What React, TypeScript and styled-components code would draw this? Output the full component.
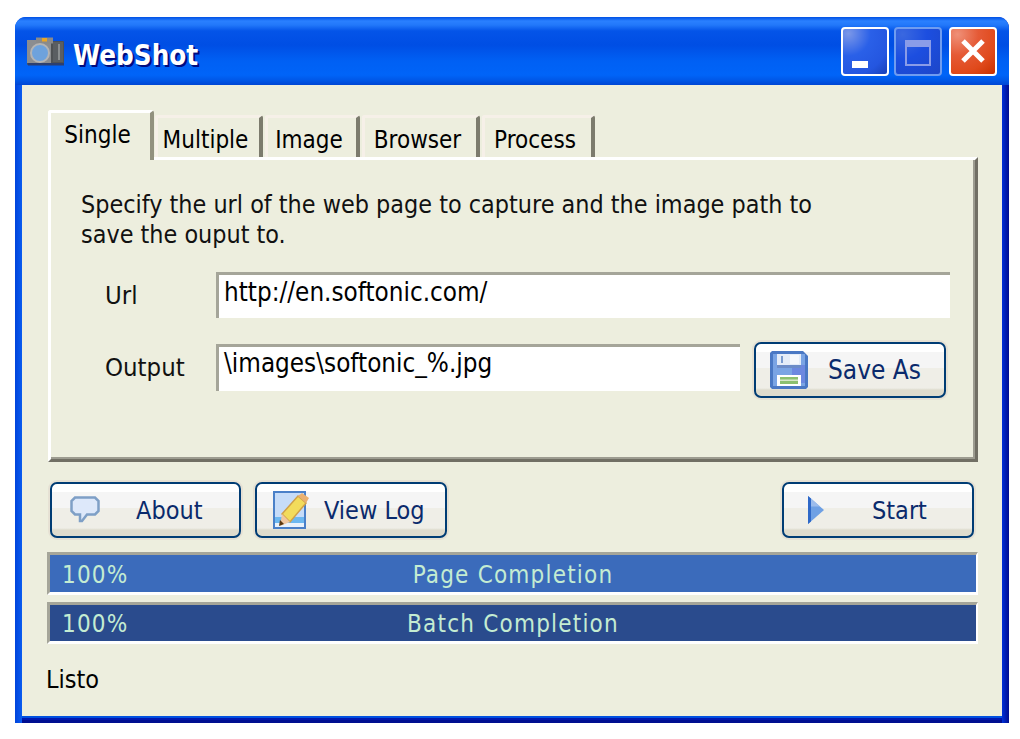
import React from "react";
import styled, { createGlobalStyle } from "styled-components";

const Global = createGlobalStyle`
  html, body { margin: 0; padding: 0; background: #fff; }
  * { box-sizing: border-box; }
  body { font-family: "DejaVu Sans", sans-serif; font-stretch: condensed; }
`;

const Page = styled.div`
  width: 1020px;
  height: 739px;
  padding: 17px 11px 16px 15px;
  background: #fff;
`;

const Window = styled.div`
  height: 706px;
  display: flex;
  flex-direction: column;
  border-radius: 11px 11px 0 0;
  overflow: hidden;
  background: linear-gradient(90deg, #0044dc 0, #0a5cf0 7px, #0030d8 987px, #000e90 994px);
`;

const TitleBar = styled.header`
  height: 68px;
  flex: none;
  display: flex;
  align-items: center;
  padding: 0 12px 0 11px;
  background: linear-gradient(
    180deg,
    #0050e4 0,
    #2a80ff 4px,
    #2278fa 8px,
    #0454e8 14px,
    #004ee4 28px,
    #0060f4 44px,
    #0064f8 58px,
    #0058e8 63px,
    #0046d4 68px
  );
`;

const AppIcon = styled.svg`
  width: 40px;
  height: 30px;
  flex: none;
  margin: 0 7px 0 0;
`;

const Title = styled.h1`
  flex: 1;
  margin: 8px 0 0;
  font: bold 27.5px "DejaVu Sans", sans-serif;
  font-stretch: condensed;
  color: #fff;
  text-shadow: 2px 2px 0 #000c80;
`;

const Caption = styled.div`
  display: flex;
  align-items: center;
`;

const CaptionButton = styled.button<{ $kind: "min" | "max" | "close" }>`
  width: 48px;
  height: 49px;
  padding: 0;
  margin: 0 0 0 ${(p) => (p.$kind === "max" ? "5px" : p.$kind === "close" ? "7px" : "0")};
  display: flex;
  align-items: center;
  justify-content: center;
  border-radius: 4px;
  border: 2.5px solid ${(p) => (p.$kind === "max" ? "#6f9cf0" : "#fff")};
  background: ${(p) =>
    p.$kind === "close"
      ? "radial-gradient(circle at 15% 12%, #ef9078 0, #e55a36 38%, #e04a1c 70%, #c83000 100%)"
      : p.$kind === "max"
        ? "radial-gradient(circle at 15% 12%, #3a68e0 0, #1c4ee0 45%, #1d46c8 100%)"
        : "radial-gradient(circle at 12% 10%, #7c98e8 0, #2a60e8 40%, #2456e0 75%, #1840b8 100%)"};
  svg { display: block; }
`;

const Client = styled.main`
  flex: 1;
  display: flex;
  flex-direction: column;
  margin: 0 7px 7px;
  padding: 25px 24px 0 26px;
  background: #edeede;
  box-shadow: 0 2px 0 #0050e0, 0 4px 0 #0018b0, 0 7px 0 #000e90;
`;

const TabStrip = styled.div`
  height: 47px;
  flex: none;
  display: flex;
  align-items: flex-start;
`;

const Tab = styled.div<{ $active?: boolean; $w: number; $mr: number }>`
  position: relative;
  z-index: ${(p) => (p.$active ? 2 : 1)};
  width: ${(p) => p.$w}px;
  height: ${(p) => (p.$active ? 50 : 42)}px;
  margin: ${(p) => (p.$active ? 0 : 5)}px ${(p) => p.$mr}px 0 0;
  padding: 4px 6px 0 0;
  display: flex;
  justify-content: center;
  font-size: 24px;
  line-height: 36px;
  color: #000;
  background: #edeede;
  border-top: 3px solid ${(p) => (p.$active ? "#fff" : "#f6f0e8")};
  border-left: 3px solid ${(p) => (p.$active ? "#fff" : "#f6f0e8")};
  border-right: 4px solid ${(p) => (p.$active ? "#92917f" : "#7c7b6d")};
  border-radius: 3px 3px 0 0;
`;

const Panel = styled.section`
  height: 305px;
  flex: none;
  display: flex;
  flex-direction: column;
  padding: 30px 0 0 30px;
  border-top: 3px solid #fff;
  border-left: 3px solid #fff;
  border-right: 3px solid #716f64;
  border-bottom: 3px solid #716f64;
  box-shadow: inset -2px -2px 0 #9d9c90;
`;

const Intro = styled.p`
  margin: 0;
  width: 760px;
  font-size: 24.9px;
  line-height: 30px;
  color: #111;
`;

const UrlRow = styled.div`
  display: flex;
  align-items: center;
  margin-top: 22px;
  height: 46px;
`;

const OutputRow = styled.div`
  display: flex;
  align-items: flex-start;
  margin-top: 24px;
  height: 56px;
`;

const FieldLabel = styled.label<{ $mt?: number }>`
  width: 135px;
  height: 46px;
  margin-top: ${(p) => p.$mt ?? 0}px;
  padding-left: 24px;
  flex: none;
  display: flex;
  align-items: center;
  font-size: 25.5px;
  color: #111;
`;

const Field = styled.div<{ $w: number; $h: number; $mt?: number; $pb: number }>`
  width: ${(p) => p.$w}px;
  height: ${(p) => p.$h}px;
  margin-top: ${(p) => p.$mt ?? 0}px;
  flex: none;
  padding: 0 0 ${(p) => p.$pb}px 5px;
  display: flex;
  align-items: center;
  font-size: 25.8px;
  color: #000;
  background: #fff;
  border-top: 3px solid #a5a599;
  border-left: 3px solid #a5a599;
`;

const Btn = styled.button<{ $w: number; $ml?: number; $size?: number }>`
  width: ${(p) => p.$w}px;
  height: 56px;
  flex: none;
  margin-left: ${(p) => p.$ml ?? 0}px;
  padding: 0;
  display: flex;
  align-items: center;
  font: ${(p) => p.$size ?? 25}px "DejaVu Sans", sans-serif;
  font-stretch: condensed;
  color: #0a2a6c;
  border: 2px solid #003c74;
  border-radius: 7px;
  background: linear-gradient(
    180deg,
    #fff 0,
    #fff 8px,
    #f5f5f5 8px,
    #f5f5f5 24px,
    #efeee7 24px,
    #efeee7 44px,
    #dedbcd 46px,
    #dedbcd 54px
  );
  box-shadow: 0 0 0 2px #e6e1d4;
`;

const BtnIcon = styled.svg<{ $ml: number }>`
  flex: none;
  margin-left: ${(p) => p.$ml}px;
`;

const BtnText = styled.span<{ $ml: number }>`
  margin-left: ${(p) => p.$ml}px;
  white-space: nowrap;
`;

const ActionRow = styled.div`
  display: flex;
  margin: 20px 4px 14px 2px;
`;

const Spacer = styled.div`
  flex: 1;
`;

const Bar = styled.div<{ $fill: string; $h: number; $mb: number }>`
  height: ${(p) => p.$h}px;
  margin: 0 0 ${(p) => p.$mb}px -1px;
  flex: none;
  display: grid;
  grid-template-columns: 1fr auto 1fr;
  align-items: center;
  padding: 2px 12px 0;
  font-size: 24px;
  letter-spacing: 1.2px;
  color: #c4ecd2;
  background: ${(p) => p.$fill};
  border-top: 3px solid #a5a599;
  border-left: 3px solid #a5a599;
  border-bottom: 3px solid #fff;
  border-right: 2px solid #fff;
`;

const Status = styled.div`
  margin: 18px 0 0 -2px;
  font-size: 25px;
  line-height: 36px;
  color: #000;
`;

const CameraIcon = () => (
  <AppIcon viewBox="0 0 40 30">
    <rect x="1" y="5" width="37" height="24" rx="1" fill="#4e5154" />
    <rect x="1" y="4" width="24" height="23" fill="#8b8d90" />
    <rect x="10" y="1.5" width="17" height="6" fill="#8a8a8a" />
    <rect x="16" y="2" width="5" height="3.5" fill="#e8a628" />
    <rect x="27" y="6" width="10" height="20" fill="#5a5e62" />
    <rect x="32" y="8" width="2" height="16" fill="#8a8e90" />
    <rect x="2" y="27" width="36" height="2.5" fill="#2c3f70" />
    <circle cx="14" cy="17" r="9" fill="#6ea2dc" stroke="#b4b4b4" strokeWidth="2" />
  </AppIcon>
);

const MinGlyph = () => (
  <svg width="16" height="7" viewBox="0 0 16 7" style={{ marginTop: 26, marginRight: 10 }}>
    <rect width="16" height="7" fill="#fff" />
  </svg>
);

const MaxGlyph = () => (
  <svg width="26" height="26" viewBox="0 0 26 26" style={{ marginTop: 4 }}>
    <rect x="1" y="3.5" width="24" height="21.5" fill="none" stroke="#8a9ce8" strokeWidth="2" />
    <rect y="0" width="26" height="7" fill="#8a9ce8" />
  </svg>
);

const CloseGlyph = () => (
  <svg width="26" height="26" viewBox="0 0 26 26">
    <path d="M3 3 L23 23 M23 3 L3 23" stroke="#fff" strokeWidth="5" />
  </svg>
);

const FloppyIcon = () => (
  <BtnIcon $ml={14} width="38" height="38" viewBox="0 0 38 38">
    <path d="M2 0 H33 L38 5 V36 L36 38 H2 L0 36 V2 Z" fill="#4a78c4" />
    <rect x="3" y="3" width="32" height="32" fill="#7aa4e4" />
    <rect x="22" y="14" width="13" height="18" fill="#6c88e0" />
    <rect x="7" y="3" width="24" height="11" fill="#e4ecf8" />
    <rect x="20" y="4" width="9" height="9" fill="#f6f8fc" />
    <rect x="11" y="5" width="2" height="7" fill="#7a9cd0" />
    <rect x="7" y="14" width="24" height="3" fill="#6c8cc8" />
    <rect x="7" y="24" width="24" height="11" fill="#fff" />
    <rect x="10" y="26" width="18" height="7" fill="#8cc070" />
    <rect x="10" y="28.5" width="18" height="1.5" fill="#d8e8c8" />
  </BtnIcon>
);

const BubbleIcon = () => (
  <BtnIcon $ml={18} width="30" height="28" viewBox="0 0 30 28">
    <path
      d="M5 1.5 H25 L28.5 5 V15 L25 18.5 H17 L12 25 H10 V18.5 H5 L1.5 15 V5 Z"
      fill="#dde8fa"
      stroke="#7e9fc6"
      strokeWidth="2.5"
    />
  </BtnIcon>
);

const PencilIcon = () => (
  <BtnIcon $ml={16} width="36" height="38" viewBox="0 0 36 38">
    <rect x="1" y="1" width="31" height="36" fill="#c6dcf8" stroke="#4a80c8" strokeWidth="2" />
    <rect x="2" y="26" width="29" height="6" fill="#6cb8f0" />
    <rect x="2" y="32" width="29" height="4" fill="#e8f2fc" />
    <path d="M9 23 L25 5 L33 12 L17 31 Z" fill="#f2dc5c" stroke="#d0a048" strokeWidth="1.5" />
    <path d="M25 5 L29 2 L36 7 L33 12 Z" fill="#eab070" />
    <path d="M9 23 L17 31 L7 35 Z" fill="#f0c8a0" />
    <path d="M7 29 L11 33 L6 35 Z" fill="#5c3810" />
  </BtnIcon>
);

const PlayIcon = () => (
  <BtnIcon $ml={24} width="16" height="28" viewBox="0 0 16 28">
    <path d="M0 0 L16 14 L0 28 Z" fill="#6ea0e4" />
    <path d="M0 0 L3 2.5 V25.5 L0 28 Z" fill="#2e68c8" />
    <path d="M3 2.5 L12 10.5 H3 Z" fill="#9cbcec" />
  </BtnIcon>
);

export default function App() {
  return (
    <Page>
      <Global />
      <Window>
        <TitleBar>
          <CameraIcon />
          <Title>WebShot</Title>
          <Caption>
            <CaptionButton $kind="min" aria-label="Minimize"><MinGlyph /></CaptionButton>
            <CaptionButton $kind="max" aria-label="Maximize"><MaxGlyph /></CaptionButton>
            <CaptionButton $kind="close" aria-label="Close"><CloseGlyph /></CaptionButton>
          </Caption>
        </TitleBar>
        <Client>
          <TabStrip>
            <Tab $active $w={106} $mr={1}>Single</Tab>
            <Tab $w={108} $mr={2}>Multiple</Tab>
            <Tab $w={95} $mr={2}>Image</Tab>
            <Tab $w={118} $mr={2}>Browser</Tab>
            <Tab $w={113} $mr={0}>Process</Tab>
          </TabStrip>
          <Panel>
            <Intro>
              Specify the url of the web page to capture and the image path to save the ouput to.
            </Intro>
            <UrlRow>
              <FieldLabel>Url</FieldLabel>
              <Field $w={734} $h={46} $pb={9}>http://en.softonic.com/</Field>
            </UrlRow>
            <OutputRow>
              <FieldLabel $mt={2}>Output</FieldLabel>
              <Field $w={524} $h={47} $mt={2} $pb={12}>\images\softonic_%.jpg</Field>
              <Btn $w={192} $ml={14} $size={26}>
                <FloppyIcon />
                <BtnText $ml={20}>Save As</BtnText>
              </Btn>
            </OutputRow>
          </Panel>
          <ActionRow>
            <Btn $w={191}>
              <BubbleIcon />
              <BtnText $ml={36}>About</BtnText>
            </Btn>
            <Btn $w={192} $ml={14}>
              <PencilIcon />
              <BtnText $ml={15}>View Log</BtnText>
            </Btn>
            <Spacer />
            <Btn $w={192}>
              <PlayIcon />
              <BtnText $ml={48}>Start</BtnText>
            </Btn>
          </ActionRow>
          <Bar $fill="#3b6bbb" $h={43} $mb={7}>
            <span>100%</span>
            <span>Page Completion</span>
          </Bar>
          <Bar $fill="#2a4b8d" $h={42} $mb={0}>
            <span>100%</span>
            <span>Batch Completion</span>
          </Bar>
          <Status>Listo</Status>
        </Client>
      </Window>
    </Page>
  );
}
